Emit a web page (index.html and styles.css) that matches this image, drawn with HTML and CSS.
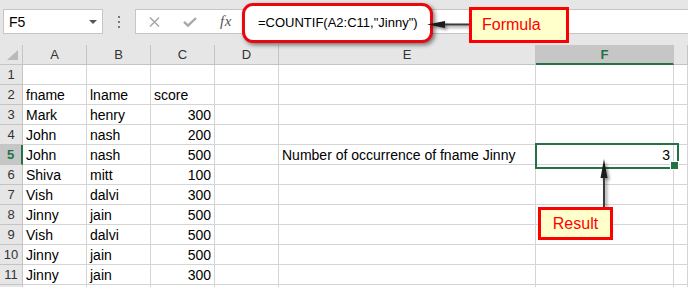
FILE: index.html
```html
<!DOCTYPE html>
<html lang="en">
<head>
<meta charset="utf-8">
<title>COUNTIF example</title>
<link rel="stylesheet" href="styles.css">
</head>
<body>
<div class="app">
  <div class="toolbar">
    <div class="namebox"><span class="nb-text">F5</span><span class="caret"></span></div>
    <div class="grip"><i></i><i></i><i></i></div>
    <div class="fbar">
      <span class="fbtn"><svg width="11" height="10" viewBox="0 0 11 10"><path d="M1 0.5 L10 9.5 M10 0.5 L1 9.5" stroke="#a8a8a8" stroke-width="1.5" fill="none"/></svg></span>
      <span class="fbtn"><svg width="14" height="10" viewBox="0 0 14 10"><path d="M1 4.8 L5 8.6 L13 1" stroke="#a8a8a8" stroke-width="2.4" fill="none"/></svg></span>
      <span class="fbtn fx">fx</span>
      <div class="finput"><span class="ftext">=COUNTIF(A2:C11,"Jinny")</span></div>
    </div>
  </div>

  <div class="sheet">
    <div class="c hd corner"></div><div class="c hd ch">A</div><div class="c hd ch">B</div><div class="c hd ch">C</div><div class="c hd ch">D</div><div class="c hd ch">E</div><div class="c hd ch hs colsel">F</div><div class="c hd ch"></div>

    <div class="c hd rh">1</div><div class="c"></div><div class="c"></div><div class="c"></div><div class="c"></div><div class="c"></div><div class="c"></div><div class="c"></div>

    <div class="c hd rh">2</div><div class="c">fname</div><div class="c">lname</div><div class="c">score</div><div class="c"></div><div class="c"></div><div class="c"></div><div class="c"></div>

    <div class="c hd rh">3</div><div class="c">Mark</div><div class="c">henry</div><div class="c num">300</div><div class="c"></div><div class="c"></div><div class="c"></div><div class="c"></div>

    <div class="c hd rh">4</div><div class="c">John</div><div class="c">nash</div><div class="c num">200</div><div class="c"></div><div class="c"></div><div class="c"></div><div class="c"></div>

    <div class="c hd rh hs rowsel">5</div><div class="c">John</div><div class="c">nash</div><div class="c num">500</div><div class="c"></div><div class="c">Number of occurrence of fname Jinny</div><div class="c num sel">3</div><div class="c"></div>

    <div class="c hd rh">6</div><div class="c">Shiva</div><div class="c">mitt</div><div class="c num">100</div><div class="c"></div><div class="c"></div><div class="c"></div><div class="c"></div>

    <div class="c hd rh">7</div><div class="c">Vish</div><div class="c">dalvi</div><div class="c num">300</div><div class="c"></div><div class="c"></div><div class="c"></div><div class="c"></div>

    <div class="c hd rh">8</div><div class="c">Jinny</div><div class="c">jain</div><div class="c num">500</div><div class="c"></div><div class="c"></div><div class="c"></div><div class="c"></div>

    <div class="c hd rh">9</div><div class="c">Vish</div><div class="c">dalvi</div><div class="c num">500</div><div class="c"></div><div class="c"></div><div class="c"></div><div class="c"></div>

    <div class="c hd rh">10</div><div class="c">Jinny</div><div class="c">jain</div><div class="c num">500</div><div class="c"></div><div class="c"></div><div class="c"></div><div class="c"></div>

    <div class="c hd rh">11</div><div class="c">Jinny</div><div class="c">jain</div><div class="c num">300</div><div class="c"></div><div class="c"></div><div class="c"></div><div class="c"></div>

    <div class="c hd rh"></div><div class="c"></div><div class="c"></div><div class="c"></div><div class="c"></div><div class="c"></div><div class="c"></div><div class="c"></div>
  </div>

  <div class="ring"></div>
  <svg class="arrows" width="688" height="287" viewBox="0 0 688 287">
    <defs>
      <filter id="sh" x="-50%" y="-50%" width="200%" height="200%">
        <feDropShadow dx="2" dy="2" stdDeviation="1.6" flood-color="#000" flood-opacity="0.45"/>
      </filter>
    </defs>
    <g filter="url(#sh)">
      <line x1="440" y1="24.5" x2="474" y2="24.5" stroke="#3a3a3a" stroke-width="2"/>
      <polygon points="427,24.5 445,21 445,28" fill="#1e1e1e"/>
      <line x1="604" y1="174" x2="604" y2="218" stroke="#3a3a3a" stroke-width="2"/>
      <polygon points="604,159 600.5,178 607.5,178" fill="#1e1e1e"/>
    </g>
  </svg>
  <div class="label label-formula">Formula</div>
  <div class="label label-result">Result</div>
</div>
</body>
</html>
```

FILE: styles.css
```css
* { box-sizing: border-box; }

html, body {
  margin: 0;
  padding: 0;
  background: #ffffff;
}

body {
  width: 688px;
  height: 287px;
  overflow: hidden;
  font-family: "Liberation Sans", Arial, sans-serif;
  color: #000;
}

.app {
  position: relative;
  width: 688px;
  height: 287px;
  overflow: hidden;
}

/* ---------- toolbar ---------- */
.toolbar {
  height: 45px;
  background: #e6e6e6;
  display: flex;
  align-items: flex-start;
  padding: 9px 0 0 3px;
}

.namebox {
  width: 100px;
  height: 25px;
  background: #fff;
  border: 1px solid #c6c6c6;
  display: flex;
  align-items: center;
  justify-content: space-between;
  padding: 0 5px 0 5px;
  font-size: 14px;
}

.caret {
  width: 0;
  height: 0;
  border-left: 4px solid transparent;
  border-right: 4px solid transparent;
  border-top: 4px solid #555;
}

.grip {
  width: 32px;
  height: 25px;
  display: flex;
  flex-direction: column;
  align-items: center;
  justify-content: center;
  gap: 3px;
}

.grip i {
  display: block;
  width: 2px;
  height: 2px;
  background: #7a7a7a;
}

.fbar {
  flex: 1;
  height: 25px;
  margin-right: -2px;
  background: #fff;
  border: 1px solid #c6c6c6;
  display: flex;
  align-items: center;
}

.fbtn {
  width: 36px;
  height: 23px;
  display: flex;
  align-items: center;
  justify-content: center;
}

.fx {
  font-family: "Liberation Serif", "Times New Roman", serif;
  font-style: italic;
  font-size: 15px;
  color: #555;
  letter-spacing: 0.5px;
}

.finput {
  flex: 1;
  height: 23px;
  padding: 3px 0 0 14px;
  font-size: 13px;
  line-height: 20px;
  white-space: nowrap;
}

.ftext {
  position: relative;
  z-index: 2;
}

/* ---------- sheet ---------- */
.sheet {
  display: grid;
  grid-template-columns: 23px 64px 64px 64px 64px 257px 138px 1fr;
  grid-auto-rows: 20px;
  font-size: 14px;
}

.c {
  border-right: 1px solid #d4d4d4;
  border-bottom: 1px solid #d4d4d4;
  padding: 1px 3px 0;
  line-height: 18px;
  white-space: nowrap;
  overflow: hidden;
}

.num { text-align: right; }

.hd {
  background: #e6e6e6;
  border-right-color: #c4c4c4;
  border-bottom-color: #c4c4c4;
  color: #333;
  font-size: 13px;
  text-align: center;
  padding: 0;
  line-height: 19px;
}

.corner {
  position: relative;
}

.corner::after {
  content: "";
  position: absolute;
  right: 4px;
  bottom: 4px;
  width: 11px;
  height: 10px;
  background: #b9b9b9;
  clip-path: polygon(100% 0, 100% 100%, 0 100%);
}

.hs {
  background: #c6c6c6;
  color: #217346;
  font-weight: bold;
}

.colsel {
  border-bottom: 2px solid #217346;
}

.rowsel {
  border-right: 2px solid #217346;
}

.sel {
  position: relative;
  overflow: visible;
}

.sel::before {
  content: "";
  position: absolute;
  left: -1px;
  top: -2px;
  width: 140px;
  height: 22px;
  border: 2px solid #217346;
  z-index: 1;
}

.sel::after {
  content: "";
  position: absolute;
  left: 134px;
  top: 16px;
  width: 7px;
  height: 7px;
  background: #217346;
  border: 1px solid #fff;
  z-index: 1;
}

/* ---------- annotations ---------- */
.ring {
  position: absolute;
  left: 242px;
  top: 3px;
  width: 191px;
  height: 40px;
  border: 3px solid #e8080e;
  border-radius: 11px;
  background: #fff;
  box-shadow: 2px 2px 4px rgba(0, 0, 0, 0.5);
  z-index: 1;
}

.arrows {
  position: absolute;
  left: 0;
  top: 0;
  z-index: 2;
  pointer-events: none;
}

.label {
  position: absolute;
  border: 3px solid #ff0000;
  background: #ffffcc;
  color: #ff0000;
  font-size: 16px;
  display: flex;
  align-items: center;
  z-index: 3;
}

.label-formula {
  left: 469px;
  top: 7px;
  width: 100px;
  height: 36px;
  padding-left: 10px;
}

.label-result {
  left: 538px;
  top: 207px;
  width: 75px;
  height: 33px;
  justify-content: center;
}
```
